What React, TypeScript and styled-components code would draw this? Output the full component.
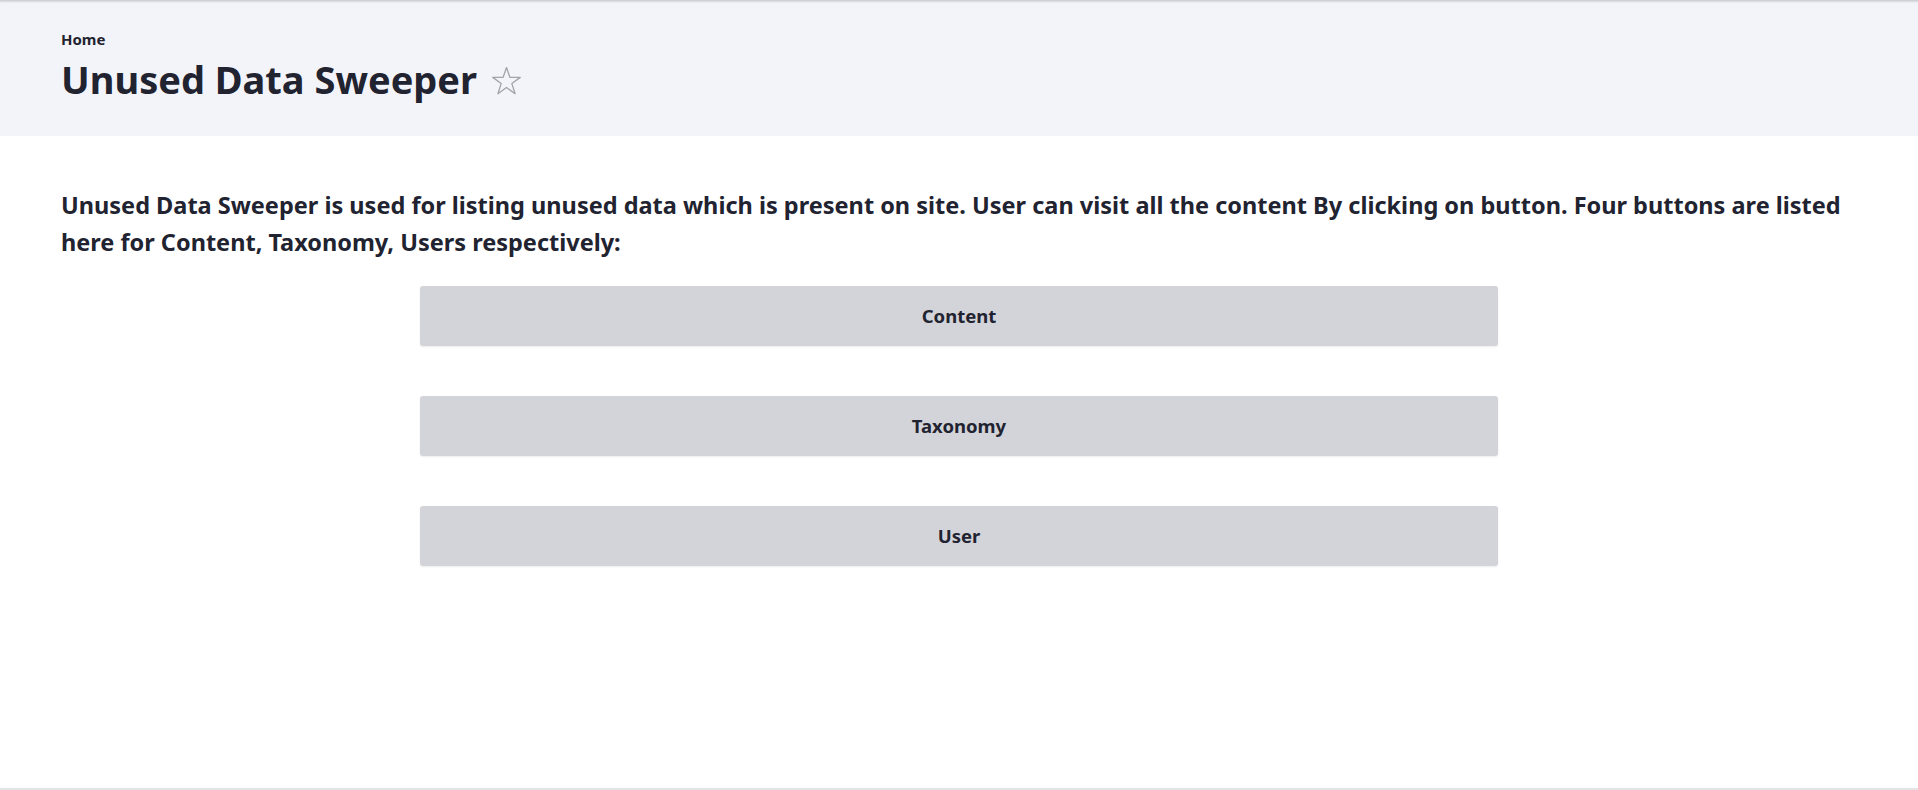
import styled, { createGlobalStyle } from 'styled-components';

const GlobalStyle = createGlobalStyle`
    html, body {
        margin: 0;
        padding: 0;
        background: #ffffff;
    }
    body {
        font-family: "Noto Sans", "Open Sans", "Liberation Sans", sans-serif;
        color: #222330;
    }
    * {
        box-sizing: border-box;
    }
`;

const Page = styled.div`
    min-height: 790px;
    display: flex;
    flex-direction: column;
    border-bottom: 2px solid #e4e4e6;
`;

const Header = styled.header`
    background-color: #f3f4f9;
    border-top: 1px solid #cfcfd4;
    box-shadow: inset 0 2px 2px -1px rgba(0, 0, 0, 0.12);
    padding: 31px 61px 33px;
`;

const Breadcrumb = styled.nav`
    font-size: 15px;
    font-weight: 700;
    line-height: 15px;
    color: #222330;
`;

const TitleRow = styled.div`
    display: flex;
    align-items: center;
    column-gap: 14px;
    margin-top: 10px;
`;

const PageTitle = styled.h1`
    margin: 0;
    font-size: 38px;
    font-weight: 700;
    line-height: 1.2;
    color: #222330;
`;

const StarButton = styled.span`
    display: inline-flex;
    width: 31px;
    height: 30px;
    margin-top: 2px;
`;

const Main = styled.main`
    padding: 51px 61px 0;
    flex: 1;
`;

const Intro = styled.p`
    margin: 0;
    font-size: 23.5px;
    font-weight: 700;
    line-height: 37px;
    color: #222330;
`;

const ButtonList = styled.div`
    display: flex;
    flex-direction: column;
    align-items: center;
    row-gap: 50px;
    margin-top: 25px;
`;

const SweepButton = styled.button`
    width: 60%;
    height: 60px;
    border: 0;
    border-radius: 3px;
    background-color: #d3d4d9;
    box-shadow: 0 1px 2px rgba(0, 0, 0, 0.08);
    font-family: inherit;
    font-size: 18.5px;
    font-weight: 700;
    color: #222330;
    cursor: pointer;
`;

const Star = () => (
    <svg width="31" height="30" viewBox="0 0 30 29" fill="none">
        <polygon
            points="15,1.5 18.3,11 28.3,11 20.2,17 23.3,26.8 15,20.8 6.7,26.8 9.8,17 1.7,11 11.7,11"
            stroke="#a3a3ab"
            strokeWidth="1.3"
            strokeLinejoin="round"
        />
    </svg>
);

const buttons = ['Content', 'Taxonomy', 'User'];

const App = () => {
    return (
        <>
            <GlobalStyle />
            <Page>
                <Header>
                    <Breadcrumb>Home</Breadcrumb>
                    <TitleRow>
                        <PageTitle>Unused Data Sweeper</PageTitle>
                        <StarButton>
                            <Star />
                        </StarButton>
                    </TitleRow>
                </Header>
                <Main>
                    <Intro>
                        Unused Data Sweeper is used for listing unused data which is present on site. User can
                        visit all the content By clicking on button. Four buttons are listed here for Content,
                        Taxonomy, Users respectively:
                    </Intro>
                    <ButtonList>
                        {buttons.map((label) => (
                            <SweepButton key={label}>{label}</SweepButton>
                        ))}
                    </ButtonList>
                </Main>
            </Page>
        </>
    );
};

export default App;
